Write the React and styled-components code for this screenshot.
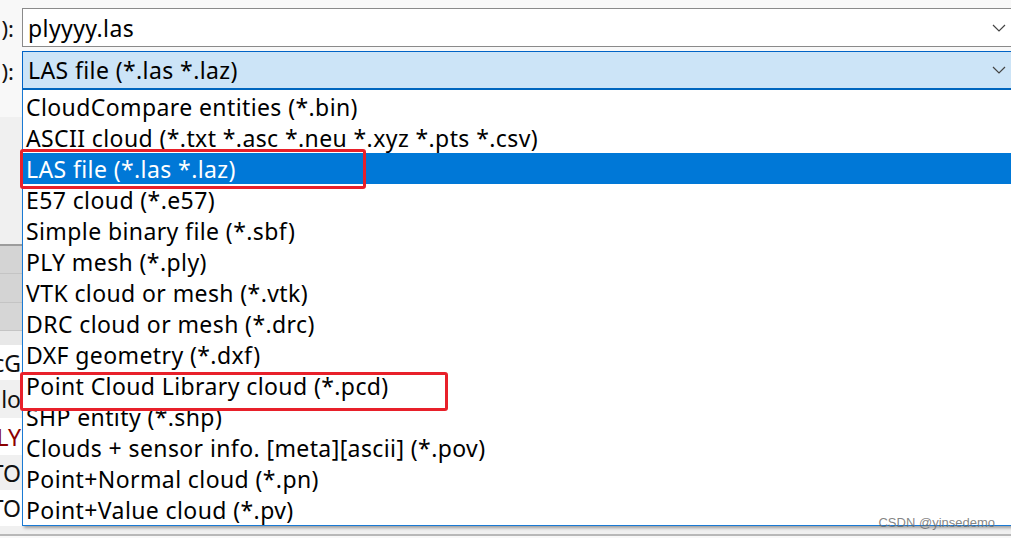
import React from 'react'
import styled, { createGlobalStyle } from 'styled-components'

const GlobalStyle = createGlobalStyle`
html, body { margin: 0; padding: 0; background: #f8f8f8; }
body { font-family: "Noto Sans", "Open Sans", sans-serif; overflow: hidden; }
`;

const Page = styled.div`
width: 1011px;
height: 538px;
position: relative;
display: flex;
flex-direction: column;
background: #f8f8f8;
overflow: hidden;
`;

const FieldRow = styled.div`
display: flex;
align-items: stretch;
margin-top: ${(props) => props.first ? "8px" : "4px"};
`;

const Label = styled.div`
width: 22px;
flex: none;
display: flex;
align-items: center;
justify-content: flex-end;
white-space: nowrap;
font-size: 22px;
color: #111;
padding-right: 8px;
box-sizing: border-box;
`;

const Combo = styled.div`
flex: 1;
height: 39px;
box-sizing: border-box;
display: flex;
align-items: center;
justify-content: space-between;
padding: 0 5px 0 5px;
font-size: 23px;
letter-spacing: 0.4px;
color: #000;
background: ${(props) => props.active ? "#cce4f7" : "#ffffff"};
border: 1px solid ${(props) => props.active ? "#0063c6" : "#8a8a8a"};
border-right: none;
border-bottom: ${(props) => props.active ? "2px solid #0067c0" : "1px solid #8a8a8a"};
`;

const Chevron = () => (
  <svg width="14" height="8" viewBox="0 0 14 8">
    <polyline points="1,1 7,7 13,1" fill="none" stroke="#444" strokeWidth="1.2" />
  </svg>
);

const Body = styled.div`
display: flex;
flex: none;
`;

const Side = styled.div`
width: 22px;
flex: none;
display: flex;
flex-direction: column;
`;

const SideBlock = styled.div`
height: ${(props) => props.h}px;
background: ${(props) => props.bg};
border-top: ${(props) => props.line || "none"};
box-sizing: border-box;
`;

const SideCell = styled.div`
height: ${(props) => props.h}px;
background: ${(props) => props.bg};
display: flex;
align-items: center;
justify-content: flex-end;
white-space: nowrap;
font-size: 23px;
color: ${(props) => props.color || "#111"};
box-sizing: border-box;
padding-right: 1px;
`;

const List = styled.div`
flex: 1;
position: relative;
background: #ffffff;
border-left: 1px solid #1a7ad4;
border-bottom: 1px solid #1a7ad4;
padding-top: 1px;
box-shadow: 2px 2px 3px rgba(0,0,0,0.35);
`;

const Item = styled.div`
height: 31px;
display: flex;
align-items: center;
padding-left: 3px;
font-size: 23px;
letter-spacing: 0.4px;
white-space: nowrap;
color: ${(props) => props.selected ? "#ffffff" : "#000000"};
background: ${(props) => props.selected ? "#0078d7" : "transparent"};
`;

const Mark = styled.div`
position: absolute;
left: -3px;
top: ${(props) => props.top}px;
width: ${(props) => props.w}px;
height: ${(props) => props.h}px;
border: 3px solid #e8202a;
border-radius: 3px;
box-sizing: border-box;
pointer-events: none;
`;

const Bottom = styled.div`
flex: 1;
background: #f0f0f0;
border-bottom: 2px solid #b8b8b8;
margin-bottom: 2px;
`;

const Watermark = styled.div`
position: absolute;
right: 16px;
bottom: 8px;
font-family: "Liberation Sans", Arial, sans-serif;
font-size: 13px;
color: rgba(110, 110, 110, 0.85);
`;

const items = [
  "CloudCompare entities (*.bin)",
  "ASCII cloud (*.txt *.asc *.neu *.xyz *.pts *.csv)",
  "LAS file (*.las *.laz)",
  "E57 cloud (*.e57)",
  "Simple binary file (*.sbf)",
  "PLY mesh (*.ply)",
  "VTK cloud or mesh (*.vtk)",
  "DRC cloud or mesh (*.drc)",
  "DXF geometry (*.dxf)",
  "Point Cloud Library cloud (*.pcd)",
  "SHP entity (*.shp)",
  "Clouds + sensor info. [meta][ascii] (*.pov)",
  "Point+Normal cloud (*.pn)",
  "Point+Value cloud (*.pv)",
];

function App() {
  return (
    <Page>
      <GlobalStyle />
      <FieldRow first>
        <Label>):</Label>
        <Combo>
          <span>plyyyy.las</span>
          <Chevron />
        </Combo>
      </FieldRow>
      <FieldRow>
        <Label>):</Label>
        <Combo active>
          <span>LAS file (*.las *.laz)</span>
          <Chevron />
        </Combo>
      </FieldRow>
      <Body>
        <Side>
          <SideBlock h={27} bg="#f8f8f8" />
          <SideBlock h={127} bg="#f0f0f0" />
          <SideBlock h={29} bg="#d4d4d4" line="2px solid #9c9c9c" />
          <SideBlock h={29} bg="#d4d4d4" line="1px solid #c4c4c4" />
          <SideBlock h={28} bg="#d6d6d6" line="1px solid #c4c4c4" />
          <SideBlock h={15} bg="#e8e8e8" line="1px solid #c4c4c4" />
          <SideCell h={35} bg="#ffffff">cG</SideCell>
          <SideCell h={38} bg="#f0f0f0">lo</SideCell>
          <SideCell h={37} bg="#ffffff" color="#8b0000">LY</SideCell>
          <SideCell h={35} bg="#f0f0f0">TO</SideCell>
          <SideCell h={36} bg="#ffffff">TO</SideCell>
        </Side>
        <List>
          {items.map((text, i) => (
            <Item key={text} selected={i === 2}>{text}</Item>
          ))}
          <Mark top={59} w={346} h={40} />
          <Mark top={282} w={428} h={39} />
        </List>
      </Body>
      <Bottom />
      <Watermark>CSDN @yinsedemo</Watermark>
    </Page>
  )
}

export default App
